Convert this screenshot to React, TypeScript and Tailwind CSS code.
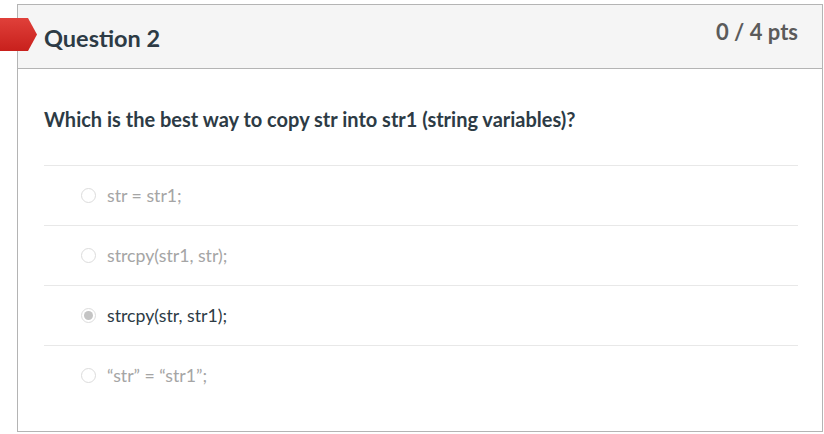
import React from 'react';

const answers = [
  { id: 1, text: 'str = str1;', selected: false },
  { id: 2, text: 'strcpy(str1, str);', selected: false },
  { id: 3, text: 'strcpy(str, str1);', selected: true },
  { id: 4, text: '\u201cstr\u201d = \u201cstr1\u201d;', selected: false },
];

const Radio = ({ checked }: { checked: boolean }) => (
  <span className="flex h-[15px] w-[15px] shrink-0 items-center justify-center rounded-full border border-[#dcdcdc] bg-white">
    {checked && <span className="h-[9px] w-[9px] rounded-full bg-[#c4c4c4]" />}
  </span>
);

const App = () => {
  return (
    <div className="h-[434px] w-[824px] bg-white pt-[4px] pl-[17px]" style={{ fontFamily: 'Lato, "Open Sans", sans-serif' }}>
      <div className="relative h-[428px] w-[806px] border border-[#b4b4b4] bg-white">
        {/* red flag */}
        <svg className="absolute left-[-18px] top-[13px]" width="38" height="33" viewBox="0 0 38 33">
          <defs>
            <linearGradient id="flag" x1="0" y1="0" x2="0" y2="1">
              <stop offset="0" stopColor="#e0403a" />
              <stop offset="1" stopColor="#c8201c" />
            </linearGradient>
          </defs>
          <polygon points="0,0 28,0 37,16.5 28,33 0,33" fill="url(#flag)" />
        </svg>

        <header className="flex h-[64px] justify-between border-b border-[#b4b4b4] bg-[#f5f5f5] pl-[26px] pr-[24px]">
          <h2 className="mt-[18px] text-[23.5px] font-bold leading-[30px] text-[#2d3b45]">Question 2</h2>
          <div className="mt-[13px] text-[22px] font-bold leading-[28px] text-[#5b5b5b]">0 / 4 pts</div>
        </header>

        <section className="pl-[26px] pr-[24px] pt-[35px]">
          <p className="mb-[31px] text-[20px] font-bold leading-[30px] text-[#2d3b45]">
            Which is the best way to copy str into str1 (string variables)?
          </p>
          {answers.map(answer => (
            <div key={answer.id} className="flex h-[60px] items-center gap-[11px] border-t border-[#e8e8e8] pl-[37px]">
              <Radio checked={answer.selected} />
              <span className={`text-[17.7px] leading-[26px] ${answer.selected ? 'text-[#2d3b45]' : 'text-[#a5a5a5]'}`}>
                {answer.text}
              </span>
            </div>
          ))}
        </section>
      </div>
    </div>
  );
};

export default App;
